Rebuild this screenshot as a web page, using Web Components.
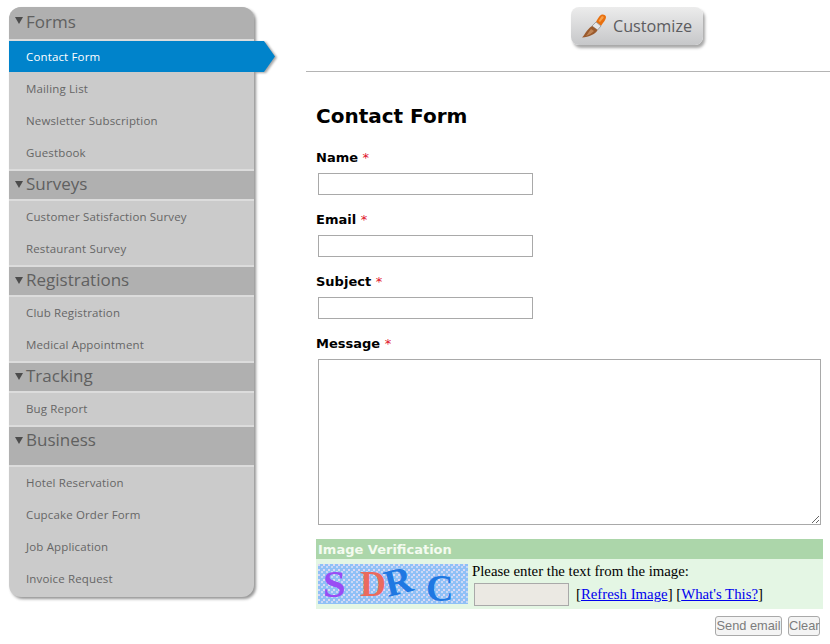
<!DOCTYPE html>
<html>
<head>
<meta charset="utf-8">
<title>Contact Form</title>
<style>
    html, body { margin: 0; padding: 0; background: #fff; }
    body { height: 644px; overflow: hidden; }
</style>
</head>
<body>
<form-app>
    <side-nav slot="nav">
        <nav-group label="Forms" height="32">
            <nav-item active>Contact Form</nav-item>
            <nav-item>Mailing List</nav-item>
            <nav-item>Newsletter Subscription</nav-item>
            <nav-item>Guestbook</nav-item>
        </nav-group>
        <nav-group label="Surveys" height="30">
            <nav-item>Customer Satisfaction Survey</nav-item>
            <nav-item>Restaurant Survey</nav-item>
        </nav-group>
        <nav-group label="Registrations" height="30">
            <nav-item>Club Registration</nav-item>
            <nav-item>Medical Appointment</nav-item>
        </nav-group>
        <nav-group label="Tracking" height="30">
            <nav-item>Bug Report</nav-item>
        </nav-group>
        <nav-group label="Business" height="40">
            <nav-item>Hotel Reservation</nav-item>
            <nav-item>Cupcake Order Form</nav-item>
            <nav-item>Job Application</nav-item>
            <nav-item>Invoice Request</nav-item>
        </nav-group>
    </side-nav>
    <customize-button slot="top"></customize-button>
    <contact-form slot="main"></contact-form>
</form-app>

<script>
(function() {
    const appTemplate = document.createElement('template');
    appTemplate.innerHTML = `
<style>
    :host { display: flex; width: 830px; height: 644px; overflow: hidden; }
    #left { width: 306px; flex: none; padding: 7px 0 0 9px; box-sizing: border-box; }
    #right { flex: 1; min-width: 0; }
    #top { box-sizing: border-box; height: 72px; border-bottom: 1px solid #b4b4b4; padding: 7px 0 0 265px; }
</style>
<div id="left"><slot name="nav"></slot></div>
<div id="right">
    <div id="top"><slot name="top"></slot></div>
    <slot name="main"></slot>
</div>`;

    class FormApp extends HTMLElement {
        constructor() {
            super();
            this.attachShadow({ mode: 'open' });
            this.shadowRoot.appendChild(appTemplate.content.cloneNode(true));
        }
    }

    const navTemplate = document.createElement('template');
    navTemplate.innerHTML = `
<style>
    :host {
        display: block;
        width: 245px;
        padding-bottom: 2px;
        background: #cbcbcb;
        border-radius: 12px;
        box-shadow: 2px 2px 3px rgba(0, 0, 0, .42);
    }
</style>
<slot></slot>`;

    class SideNav extends HTMLElement {
        constructor() {
            super();
            this.attachShadow({ mode: 'open' });
            this.shadowRoot.appendChild(navTemplate.content.cloneNode(true));
        }
    }

    const groupTemplate = document.createElement('template');
    groupTemplate.innerHTML = `
<style>
    :host { display: block; font-family: "Open Sans", sans-serif; }
    #head {
        box-sizing: border-box;
        display: flex;
        align-items: flex-start;
        background: #b0b0b0;
        color: #606060;
        font-size: 17px;
        line-height: 26px;
        padding-left: 6px;
        border-top: 2px solid #dcdcdc;
    }
    :host(:first-child) #head { border-top: 0; border-radius: 12px 12px 0 0; line-height: 30px; }
    #arrow {
        width: 0;
        height: 0;
        margin: 10px 3px 0 0;
        border-left: 4px solid transparent;
        border-right: 4px solid transparent;
        border-top: 7px solid #4c4c4c;
    }
    #rule { height: 2px; background: #dcdcdc; }
    #items { display: block; }
</style>
<div id="head"><span id="arrow"></span><span id="label"></span></div>
<div id="rule"></div>
<div id="items"><slot></slot></div>`;

    class NavGroup extends HTMLElement {
        constructor() {
            super();
            this.attachShadow({ mode: 'open' });
            this.shadowRoot.appendChild(groupTemplate.content.cloneNode(true));
        }

        connectedCallback() {
            this.shadowRoot.querySelector('#label').textContent = this.getAttribute('label');
            this.shadowRoot.querySelector('#head').style.height = this.getAttribute('height') + 'px';
        }
    }

    const itemTemplate = document.createElement('template');
    itemTemplate.innerHTML = `
<style>
    :host {
        display: block;
        position: relative;
        height: 32px;
        line-height: 32px;
        padding-left: 17px;
        font-family: "Open Sans", sans-serif;
        font-size: 11.5px;
        letter-spacing: .15px;
        color: #666;
    }
    :host([active]) { background: #0083cb; color: #fff; height: 31px; margin-bottom: 1px; }
    #tip { display: none; }
    :host([active]) #tip {
        display: block;
        position: absolute;
        left: 100%;
        top: 0;
        filter: drop-shadow(2px 1px 1px rgba(0, 0, 0, .35));
    }
    #shape {
        display: block;
        width: 21px;
        height: 31px;
        background: #0083cb;
        clip-path: polygon(0 0, 10px 0, 21px 50%, 10px 100%, 0 100%);
    }
</style>
<slot></slot><span id="tip"><span id="shape"></span></span>`;

    class NavItem extends HTMLElement {
        constructor() {
            super();
            this.attachShadow({ mode: 'open' });
            this.shadowRoot.appendChild(itemTemplate.content.cloneNode(true));
        }
    }

    const customizeTemplate = document.createElement('template');
    customizeTemplate.innerHTML = `
<style>
    :host {
        display: flex;
        align-items: center;
        box-sizing: border-box;
        width: 132px;
        height: 38px;
        padding-left: 10px;
        gap: 6px;
        border-radius: 8px;
        background: linear-gradient(#ececec, #c6c7c9);
        box-shadow: 2px 3px 3px rgba(0, 0, 0, .35);
        font-family: "Open Sans", sans-serif;
        font-size: 16.2px;
        color: #5c5c60;
    }
    svg { display: block; flex: none; }
</style>
<svg width="26" height="24" viewBox="0 0 26 24">
    <path d="M20 1 C22 0 25 1 25 3 C25 6 21 10 20 12 L15 8 C16 6 18 2 20 1 Z" fill="#e8700f"/>
    <path d="M20.500 2.500 C22 2 23 2.500 22.500 4 L19 8 L17.500 7 Z" fill="#f7a04a"/>
    <path d="M15 8 L20 12 L16.500 16 L11 12 Z" fill="#e6e6e6" stroke="#8a8a8a" stroke-width=".7"/>
    <path d="M11 12 L16.500 16 C15 20 8 23 1 23.500 C4 21 5 16 11 12 Z" fill="#9a5a2d"/>
    <path d="M10 15 L13 17 C11 19 8 21 5 22 C7 20 8 17 10 15 Z" fill="#c08555"/>
</svg>
<span>Customize</span>`;

    class CustomizeButton extends HTMLElement {
        constructor() {
            super();
            this.attachShadow({ mode: 'open' });
            this.shadowRoot.appendChild(customizeTemplate.content.cloneNode(true));
        }
    }

    const formTemplate = document.createElement('template');
    formTemplate.innerHTML = `
<style>
    :host {
        display: block;
        box-sizing: border-box;
        padding: 0 7px 0 10px;
        font-family: "DejaVu Sans", sans-serif;
    }
    * { box-sizing: border-box; }
    h1 { margin: 0; padding-top: 31px; font-size: 20px; line-height: 26px; height: 77px; font-weight: bold; color: #000; }
    .field { height: 62px; }
    label { display: block; font-size: 13px; font-weight: bold; line-height: 16px; height: 24px; padding-top: 1px; color: #000; }
    label b { color: #e0102a; font-weight: normal; }
    input.text {
        display: block;
        width: 215px;
        height: 22px;
        margin-left: 2px;
        border: 1px solid #a9a9a9;
        background: #fff;
        padding: 0;
    }
    textarea {
        display: block;
        width: 503px;
        height: 166px;
        margin: 0 0 14px 2px;
        border: 1px solid #a9a9a9;
        padding: 0;
        background: #fff;
    }
    #message { height: auto; }
    #captcha { width: 507px; }
    #captcha-head {
        height: 20px;
        line-height: 21px;
        padding-left: 2px;
        background: #acd6aa;
        color: #f4fbf0;
        font-size: 13px;
        font-weight: bold;
    }
    #captcha-body {
        display: flex;
        height: 50px;
        padding: 5px 0 0 2px;
        gap: 4px;
        background: #e4f6e4;
        font-family: "Liberation Serif", serif;
        font-size: 14.8px;
        line-height: 16px;
        color: #000;
    }
    #captcha-body svg { display: block; flex: none; overflow: visible; }
    #prompt { margin-top: -1px; }
    #answer-row { display: flex; align-items: flex-start; gap: 7px; margin-top: 4px; margin-left: 2px; }
    #answer-row span { padding-top: 3px; white-space: pre; }
    #answer {
        width: 95px;
        height: 23px;
        border: 1px solid #a9a9a9;
        background: #ebe9e3;
        padding: 0;
    }
    a { color: #00e; text-decoration: underline; }
    #buttons { display: flex; justify-content: flex-end; gap: 6px; width: 504px; margin-top: 7px; }
    button {
        height: 20px;
        padding: 0;
        border: 1px solid #a9a9a9;
        border-radius: 3px;
        background: #f4f4f4;
        color: #7c7c7c;
        font-family: "Liberation Sans", sans-serif;
        font-size: 12.8px;
        line-height: 18px;
        white-space: nowrap;
    }
    #send { width: 67px; }
    #clear { width: 32px; }
</style>
<h1>Contact Form</h1>
<div class="field"><label>Name <b>*</b></label><input class="text" type="text"></div>
<div class="field"><label>Email <b>*</b></label><input class="text" type="text"></div>
<div class="field"><label>Subject <b>*</b></label><input class="text" type="text"></div>
<div class="field" id="message"><label>Message <b>*</b></label><textarea></textarea></div>
<div id="captcha">
    <div id="captcha-head">Image Verification</div>
    <div id="captcha-body">
        <svg width="150" height="40" viewBox="0 0 150 40">
            <defs>
                <pattern id="mesh" width="5" height="5" patternUnits="userSpaceOnUse">
                    <rect width="5" height="5" fill="#8fc0f6"/>
                    <rect x="0" y="0" width="2" height="2" fill="#dcd8f4"/>
                    <rect x="3" y="2" width="2" height="2" fill="#c8d8f6"/>
                </pattern>
            </defs>
            <rect width="150" height="40" fill="url(#mesh)"/>
            <g font-family="Liberation Serif, serif" font-weight="bold">
                <text x="0" y="0" font-size="37" fill="#9a4cf4" transform="translate(5 33) scale(1.1 1)">S</text>
                <text x="42" y="32" font-size="36" fill="#ea6a5e">D</text>
                <text x="70" y="33" font-size="38" fill="#1f78e2" transform="rotate(-14 70 33)">R</text>
                <text x="108" y="37" font-size="38" fill="#1f78e2">C</text>
            </g>
        </svg>
        <div id="prompt">
            <div>Please enter the text from the image:</div>
            <div id="answer-row"><input id="answer" type="text"><span>[<a href="#">Refresh Image</a>] [<a href="#">What's This?</a>]</span></div>
        </div>
    </div>
</div>
<div id="buttons"><button id="send" type="button">Send email</button><button id="clear" type="button">Clear</button></div>`;

    class ContactForm extends HTMLElement {
        constructor() {
            super();
            this.attachShadow({ mode: 'open' });
            this.shadowRoot.appendChild(formTemplate.content.cloneNode(true));
        }
    }

    window.customElements.define('form-app', FormApp);
    window.customElements.define('side-nav', SideNav);
    window.customElements.define('nav-group', NavGroup);
    window.customElements.define('nav-item', NavItem);
    window.customElements.define('customize-button', CustomizeButton);
    window.customElements.define('contact-form', ContactForm);
})();
</script>
</body>
</html>
